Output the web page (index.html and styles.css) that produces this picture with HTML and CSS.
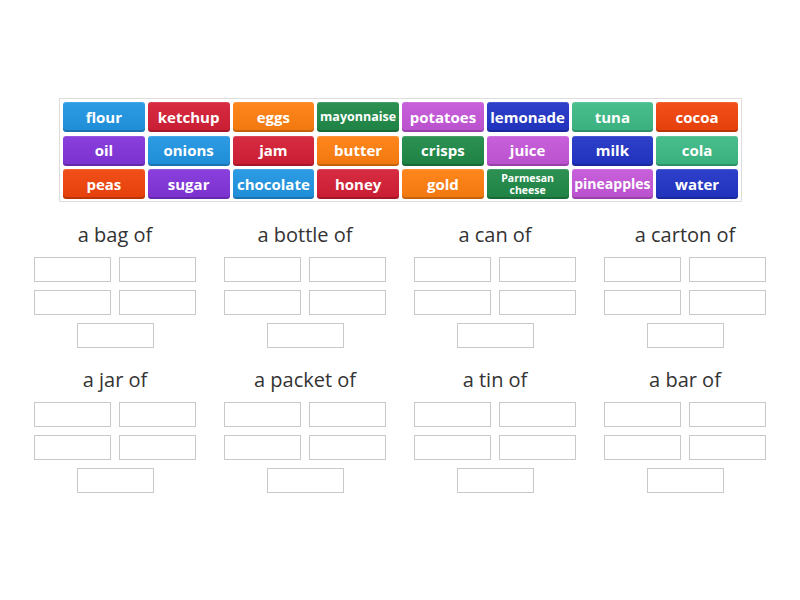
FILE: index.html
```html
<!DOCTYPE html>
<html>
<head>
<meta charset="utf-8">
<link rel="stylesheet" href="styles.css">
</head>
<body>
<div class="page">
  <div class="tiles">
    <div class="tile c-blue">flour</div>
    <div class="tile c-red">ketchup</div>
    <div class="tile c-orange">eggs</div>
    <div class="tile c-green small">mayonnaise</div>
    <div class="tile c-pink">potatoes</div>
    <div class="tile c-navy">lemonade</div>
    <div class="tile c-teal">tuna</div>
    <div class="tile c-vermil">cocoa</div>

    <div class="tile c-purple">oil</div>
    <div class="tile c-blue">onions</div>
    <div class="tile c-red">jam</div>
    <div class="tile c-orange">butter</div>
    <div class="tile c-green">crisps</div>
    <div class="tile c-pink">juice</div>
    <div class="tile c-navy">milk</div>
    <div class="tile c-teal">cola</div>

    <div class="tile c-vermil">peas</div>
    <div class="tile c-purple">sugar</div>
    <div class="tile c-blue">chocolate</div>
    <div class="tile c-red">honey</div>
    <div class="tile c-orange">gold</div>
    <div class="tile c-green tiny"><span class="ln">Parmesan</span><span class="ln">cheese</span></div>
    <div class="tile c-pink mid">pineapples</div>
    <div class="tile c-navy">water</div>
  </div>

  <div class="groups">
    <div class="group"><div class="title">a bag of</div><div class="slots"><div class="slot"></div><div class="slot"></div><div class="slot"></div><div class="slot"></div><div class="slot last"></div></div></div>
    <div class="group"><div class="title">a bottle of</div><div class="slots"><div class="slot"></div><div class="slot"></div><div class="slot"></div><div class="slot"></div><div class="slot last"></div></div></div>
    <div class="group"><div class="title">a can of</div><div class="slots"><div class="slot"></div><div class="slot"></div><div class="slot"></div><div class="slot"></div><div class="slot last"></div></div></div>
    <div class="group"><div class="title">a carton of</div><div class="slots"><div class="slot"></div><div class="slot"></div><div class="slot"></div><div class="slot"></div><div class="slot last"></div></div></div>
    <div class="group"><div class="title">a jar of</div><div class="slots"><div class="slot"></div><div class="slot"></div><div class="slot"></div><div class="slot"></div><div class="slot last"></div></div></div>
    <div class="group"><div class="title">a packet of</div><div class="slots"><div class="slot"></div><div class="slot"></div><div class="slot"></div><div class="slot"></div><div class="slot last"></div></div></div>
    <div class="group"><div class="title">a tin of</div><div class="slots"><div class="slot"></div><div class="slot"></div><div class="slot"></div><div class="slot"></div><div class="slot last"></div></div></div>
    <div class="group"><div class="title">a bar of</div><div class="slots"><div class="slot"></div><div class="slot"></div><div class="slot"></div><div class="slot"></div><div class="slot last"></div></div></div>
  </div>
</div>
</body>
</html>
```

FILE: styles.css
```css
html, body {
  margin: 0;
  padding: 0;
  background: #ffffff;
}
.page {
  width: 800px;
  height: 600px;
  padding-top: 98px;
  box-sizing: border-box;
  font-family: "Open Sans", "Noto Sans", sans-serif;
}
.tiles {
  margin-left: 59px;
  width: 683px;
  box-sizing: border-box;
  border: 1px solid #dddddd;
  padding: 3px 3px 2px 3px;
  display: grid;
  grid-template-columns: repeat(8, 1fr);
  column-gap: 3px;
  row-gap: 3.5px;
}
.tile {
  height: 30px;
  border-radius: 3px;
  color: #ffffff;
  font-weight: 700;
  font-size: 15px;
  line-height: 1;
  display: flex;
  align-items: center;
  justify-content: center;
  text-align: center;
  white-space: nowrap;
  overflow: hidden;
  box-shadow: inset 0 -2px 0 rgba(0,0,0,0.18), inset 0 1px 0 rgba(255,255,255,0.12);
  background-image: linear-gradient(to bottom, rgba(255,255,255,0.06), rgba(0,0,0,0.06));
}
.tile.small { font-size: 12.5px; }
.tile.mid { font-size: 14px; }
.tile.tiny {
  font-size: 10.5px;
  flex-direction: column;
  line-height: 12px;
}
.ln { display: block; height: 12px; }
.c-blue { background-color: #2196e3; }
.c-red { background-color: #d41f36; }
.c-orange { background-color: #ff7f10; }
.c-green { background-color: #1f8a48; }
.c-pink { background-color: #c556d9; }
.c-navy { background-color: #2234c7; }
.c-teal { background-color: #3dbb86; }
.c-vermil { background-color: #f2440b; }
.c-purple { background-color: #8234db; }

.groups {
  margin-top: 19px;
  margin-left: 34px;
  width: 732px;
  display: grid;
  grid-template-columns: repeat(4, 162px);
  column-gap: 28px;
  row-gap: 18px;
}
.group {
  display: flex;
  flex-direction: column;
  align-items: center;
}
.title {
  font-size: 20px;
  line-height: 28px;
  height: 28px;
  color: #333333;
  margin-bottom: 8px;
  white-space: nowrap;
}
.slots {
  display: grid;
  grid-template-columns: 77px 77px;
  column-gap: 8px;
  row-gap: 8px;
  justify-content: center;
}
.slot {
  width: 77px;
  height: 25px;
  box-sizing: border-box;
  border: 1px solid #c9c9c9;
  background: #ffffff;
}
.slot.last {
  grid-column: 1 / span 2;
  justify-self: center;
}
```
